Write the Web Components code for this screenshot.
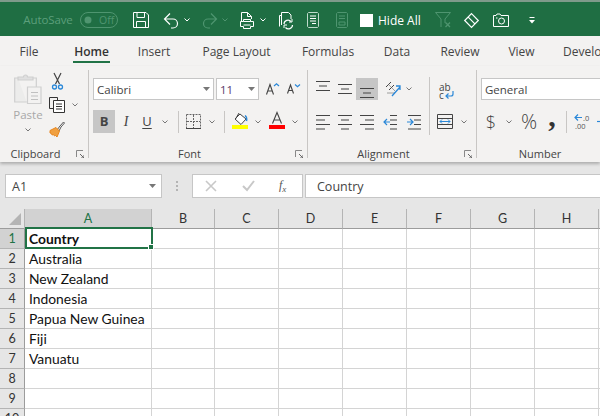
<!DOCTYPE html>
<html lang="en"><head><meta charset="utf-8"><title>Excel</title>
<style>
html,body{margin:0;padding:0;width:600px;height:416px;overflow:hidden;background:#fff}
body{display:flex;flex-direction:column;font-family:"Open Sans","Liberation Sans",sans-serif}
</style></head><body>
<xl-titlebar>
  <xl-tool w="50" ml="23" style="color:#5c9f7b;font-size:11.5px;letter-spacing:-.1px">AutoSave</xl-tool>
  <xl-icon name="toggle" w="38" h="16" ml="7"></xl-icon>
  <xl-icon name="save" w="16" h="16" ml="15"></xl-icon>
  <xl-icon name="undo" w="17" h="17" ml="14"></xl-icon>
  <xl-icon name="chevw" w="6" h="4" ml="4"></xl-icon>
  <xl-icon name="redo" w="17" h="17" ml="11"></xl-icon>
  <xl-icon name="chevf" w="6" h="4" ml="4"></xl-icon>
  <xl-icon name="print" w="14" h="17" ml="12"></xl-icon>
  <xl-icon name="chevw" w="6" h="4" ml="6"></xl-icon>
  <xl-icon name="refresh" w="15" h="17" ml="12"></xl-icon>
  <xl-icon name="doc" w="12" h="16" ml="14"></xl-icon>
  <xl-icon name="docf" w="12" h="16" ml="17"></xl-icon>
  <xl-check ml="12">Hide All</xl-check>
  <xl-icon name="filter" w="16" h="16" ml="14"></xl-icon>
  <xl-icon name="eraser" w="15" h="15" ml="13"></xl-icon>
  <xl-icon name="camera" w="16" h="14" ml="14"></xl-icon>
  <xl-icon name="more" w="6" h="7" ml="20"></xl-icon>
</xl-titlebar>
<xl-tabs>
  <xl-tab w="18" ml="20">File</xl-tab><xl-tab w="37" ml="35" active>Home</xl-tab><xl-tab w="32" ml="28">Insert</xl-tab><xl-tab w="71" ml="31">Page Layout</xl-tab><xl-tab w="52" ml="30">Formulas</xl-tab><xl-tab w="26" ml="30">Data</xl-tab><xl-tab w="40" ml="30">Review</xl-tab><xl-tab w="27" ml="28">View</xl-tab><xl-tab ml="28">Develop</xl-tab>
</xl-tabs>
<xl-ribbon>
  <xl-group label="Clipboard" w="89" launcher="1">
    <xl-row style="align-items:flex-start">
      <xl-col w="32" ml="12" mt="-4">
        <xl-icon name="paste" w="28" h="30"></xl-icon>
        <xl-tool w="30" h="16" style="color:#a8a8a8;font-size:11.5px;margin-top:3px">Paste</xl-tool>
        <xl-icon name="chev" w="6" h="4" style="margin-top:5px"></xl-icon>
      </xl-col>
      <xl-col w="36" ml="4" mt="-5" style="align-items:flex-start">
        <xl-icon name="cut" w="11" h="17" ml="4"></xl-icon>
        <xl-row style="margin-top:7px"><xl-icon name="copy" w="16" h="16" ml="1"></xl-icon><xl-icon name="chev" w="6" h="4" ml="7"></xl-icon></xl-row>
        <xl-icon name="brush" w="16" h="16" ml="1" style="margin-top:8px"></xl-icon>
      </xl-col>
    </xl-row>
  </xl-group>
  <xl-group label="Font" w="219" launcher="1">
    <xl-col ml="4" style="align-items:flex-start">
      <xl-row h="22">
        <xl-box w="121">Calibri</xl-box>
        <xl-box w="43" ml="2" chev="0" style="color:#5b3a6b">11</xl-box>
        <xl-icon name="grow" w="13" h="12" ml="7"></xl-icon>
        <xl-icon name="shrink" w="13" h="10" ml="8"></xl-icon>
      </xl-row>
      <xl-row h="23" style="margin-top:10px">
        <xl-tool w="22" h="23" active style="font-weight:700;font-size:13px">B</xl-tool>
        <xl-tool w="22" h="23" style="font-style:italic;font-family:'Liberation Serif',serif;font-size:14px">I</xl-tool>
        <xl-tool w="20" h="23" style="font-size:13px;text-decoration:underline;text-underline-offset:2px">U</xl-tool>
        <xl-tool w="16" h="23"><xl-icon name="chev" w="6" h="4"></xl-icon></xl-tool>
        <xl-sep ml="5" h="22"></xl-sep>
        <xl-icon name="borders" w="15" h="15" ml="7"></xl-icon>
        <xl-tool w="22" h="23"><xl-icon name="chev" w="6" h="4"></xl-icon></xl-tool>
        <xl-sep h="22" ml="1"></xl-sep>
        <xl-icon name="fill" w="16" h="19" ml="7"></xl-icon>
        <xl-tool w="20" h="23"><xl-icon name="chev" w="6" h="4"></xl-icon></xl-tool>
        <xl-icon name="fontcolor" w="16" h="19" ml="1"></xl-icon>
        <xl-tool w="20" h="23"><xl-icon name="chev" w="6" h="4"></xl-icon></xl-tool>
      </xl-row>
    </xl-col>
  </xl-group>
  <xl-group label="Alignment" w="169" launcher="1">
    <xl-row ml="8" style="align-items:flex-start">
      <xl-col style="align-items:flex-start">
        <xl-row h="22">
          <xl-icon name="atop" w="14" h="22"></xl-icon>
          <xl-icon name="amid" w="14" h="22" ml="8"></xl-icon>
          <xl-tool w="22" h="22" active ml="4"><xl-icon name="abot" w="14" h="22"></xl-icon></xl-tool>
          <xl-icon name="orient" w="16" h="16" ml="7"></xl-icon>
          <xl-icon name="chev" w="6" h="4" ml="5"></xl-icon>
        </xl-row>
        <xl-row h="23" style="margin-top:10px">
          <xl-icon name="aleft" w="14" h="14"></xl-icon>
          <xl-icon name="acen" w="14" h="14" ml="8"></xl-icon>
          <xl-icon name="aright" w="14" h="14" ml="8"></xl-icon>
          <xl-icon name="indl" w="14" h="14" ml="9"></xl-icon>
          <xl-icon name="indr" w="14" h="14" ml="10"></xl-icon>
        </xl-row>
      </xl-col>
      <xl-sep h="58" ml="8" style="margin-top:-1px"></xl-sep>
      <xl-col style="align-items:flex-start">
        <xl-row h="22"><xl-icon name="wrap" w="15" h="16" ml="9" style="margin-top:5px"></xl-icon></xl-row>
        <xl-row h="23" style="margin-top:10px"><xl-icon name="merge" w="16" h="15" ml="7"></xl-icon><xl-icon name="chev" w="6" h="4" ml="8"></xl-icon></xl-row>
      </xl-col>
    </xl-row>
  </xl-group>
  <xl-group label="Number" w="126">
    <xl-col ml="4" style="align-items:flex-start">
      <xl-box w="130">General</xl-box>
      <xl-row h="23" style="margin-top:10px">
        <xl-tool w="20" h="23" style="font-size:18px;font-weight:300">$</xl-tool>
        <xl-icon name="chev" w="6" h="4" ml="5"></xl-icon>
        <xl-tool w="24" h="23" ml="5" style="font-size:20px;font-weight:300">%</xl-tool>
        <xl-tool w="10" h="23" ml="6" style="font:700 30px/23px 'Liberation Serif',serif;align-items:flex-start;color:#333;overflow:visible"><span style="position:relative;top:-6px">,</span></xl-tool>
        <xl-sep h="22" ml="9"></xl-sep>
        <xl-icon name="incdec" w="17" h="15" ml="7"></xl-icon>
        <xl-icon name="incarrow" w="8" h="15" ml="6"></xl-icon>
      </xl-row>
    </xl-col>
  </xl-group>
</xl-ribbon>
<xl-formulabar name="A1" value="Country"></xl-formulabar>
<xl-sheet></xl-sheet>
<script>
const ICONS={
toggle:'<rect x=".5" y=".5" width="37" height="15" rx="7.5" fill="none" stroke="#4f9570"/><circle cx="8" cy="8" r="3.5" fill="#4f9570"/><text x="19" y="12" font-size="10.5" fill="#4f9570" font-family="Open Sans,sans-serif">Off</text>',
save:'<path d="M.5.5h12.5l2.5 2.5v12.5H.5zM4 .5v5h7.5v-5M3.5 15.5v-6h9v6" fill="none" stroke="#fff"/>',
undo:'<path d="M7 1.5 1.5 7 7 12.5M1.5 7H10a4.5 4.5 0 0 1 0 9H8" fill="none" stroke="#fff" stroke-width="1.2"/>',
redo:'<path d="M10 1.5 15.5 7 10 12.5M15.5 7H7a4.5 4.5 0 0 0 0 9h2" fill="none" stroke="#4f9570" stroke-width="1.2"/>',
chevw:'<path d="M.5.5 3 3 5.5.5" fill="none" stroke="#fff"/>',
chevf:'<path d="M.5.5 3 3 5.5.5" fill="none" stroke="#4f9570"/>',
chev:'<path d="M.5.5 3 3 5.5.5" fill="none" stroke="#777"/>',
print:'<path d="M1.5 9V.5h6l4 4V7M7.5.5v4h4" fill="none" stroke="#fff"/><path d="M3.5 7.5h7v2h3v5h-3v2h-7v-2h-3v-5h3zM3.5 9.5h7M3.5 13h7" fill="none" stroke="#fff"/>',
refresh:'<path d="M1.500 14.500V3.500h2M3.500 13V.5h7l2.500 2.500v4" fill="none" stroke="#fff"/><path d="M6 12a4 4 0 0 1 7-2.500M14.500 13a4 4 0 0 1-7 2.500" fill="none" stroke="#fff" stroke-width="1.200"/><path d="M14 7v3h-3M6 16v-3h3" fill="none" stroke="#fff"/>',
doc:'<path d="M1.500.5h9l1 1v13l-1 1h-9l-1-1v-13z" fill="none" stroke="#bfdacb"/><path d="M3 4h6M3 6.500h6M3 9h6M5 11.500h4" stroke="#fff"/>',
docf:'<path d="M1.500.5h9l1 1v13l-1 1h-9l-1-1v-13z" fill="none" stroke="#4f9570"/><path d="M3 4h6M3 6.500h6M3 10h6v3H3z" stroke="#4f9570" fill="none"/>',
filter:'<path d="M.5.500h15L10 7v4M6 7 .500.500M6 7v8" fill="none" stroke="#4f9570"/><path d="M10.500 10.500 15 15M15 10.500 10.500 15" stroke="#4f9570" stroke-width="1.300"/>',
eraser:'<path d="M7.500.7 14.300 7.500 7.500 14.300.7 7.500zM4.200 4.100 10.900 10.900" fill="none" stroke="#fff" stroke-width="1.200"/>',
camera:'<path d="M.5 2.500h2.500l1-1.500h3l1 1.500h7.500v11H.5z" fill="none" stroke="#fff"/><circle cx="8.500" cy="8" r="3" fill="none" stroke="#fff"/><path d="M3 5h1.500" stroke="#fff"/>',
more:'<path d="M.5.5h5" stroke="#fff"/><path d="M0 3h6L3 6.500z" fill="#fff"/>',
paste:'<g fill="none" stroke="#cfcfcf" stroke-width="1.200"><path d="M4 4H.7v24h12" fill="#ececeb"/><path d="M19 4h3.300v9"/><path d="M4 6V3h5.500a2 2 0 0 1 4 0H19v3z" fill="#e0e0e0"/><path d="M13.500 13H27v16.500H13.500z" fill="#f3f2f1"/></g><path d="M17 18.500h7M17 22h7M17 25.500h7" stroke="#c0c0c0"/>',
cut:'<path d="M2 0 7.500 11M9 0 3.500 11" stroke="#444" stroke-width="1.200" fill="none"/><circle cx="2.500" cy="14" r="2" fill="none" stroke="#2b88d8" stroke-width="1.300"/><circle cx="8.500" cy="14" r="2" fill="none" stroke="#2b88d8" stroke-width="1.300"/>',
copy:'<path d="M4 11.500H.5v-11h8v3" fill="none" stroke="#333"/><path d="M4.500 3.500h11v12h-11z" fill="#fff" stroke="#333"/><path d="M7 7h6M7 9.500h6M7 12h6" stroke="#333"/>',
brush:'<path d="M8 9 11 5l3.500-4 1 1L12 6l-2 4z" fill="#fff" stroke="#444" stroke-width=".9"/><path d="M1 9.500 7 6.500l3.500 3.500-2.500 6-1.500-1.500-1 .5-1-1.500-1.500.5-.5-1.500-1.500-.5z" fill="#f0a040" stroke="#e8861e"/>',
grow:'<path d="M.5 11.500 4 1.500l3.500 10M1.800 8h4.400" fill="none" stroke="#444" stroke-width="1.100"/><path d="M8 3l2.500-2.300L13 3" fill="none" stroke="#2b88d8" stroke-width="1.200"/>',
shrink:'<path d="M.5 9.500 3.500 1l3 8.500M1.500 6.500h4" fill="none" stroke="#444" stroke-width="1.100"/><path d="M8 .5l2.500 2.300L13 .5" fill="none" stroke="#2b88d8" stroke-width="1.200"/>',
borders:'<path d="M.5.5h14v14H.5z" fill="none" stroke="#666" stroke-dasharray="2 1"/><path d="M7.500 1v13M1 7.500h13" stroke="#666" stroke-dasharray="2 1"/><path d="M0 14.500h15" stroke="#444"/>',
fill:'<path d="M8 2l6 5-5 5.500-6-5.500z" fill="#fff" stroke="#444"/><path d="M3.500 7 7 1" stroke="#444"/><path d="M13 3.500c1.500 1 2 3 1.500 5.500" fill="none" stroke="#2b88d8" stroke-width="1.500"/><rect y="13" width="16" height="4" fill="#ff0"/>',
fontcolor:'<path d="M3.500 11.500 8 .5l4.500 11M5 8h6" fill="none" stroke="#444" stroke-width="1.100"/><rect y="13" width="16" height="4" fill="#f00"/>',
atop:'<path d="M0 3.500h14M3 8h8M0 12.500h14" stroke="#444" stroke-width="1.100"/>',
amid:'<path d="M0 6.500h14M3 11h8M0 15.500h14" stroke="#444" stroke-width="1.100"/>',
abot:'<path d="M0 10.500h14M3 15h8M0 19.500h14" stroke="#444" stroke-width="1.100"/>',
orient:'<path d="M1 6 6 1M4 9 9 4" stroke="#444" fill="none"/><path d="M2 12 10 12M3 3l7 7" stroke="#666" fill="none" opacity=".6"/><path d="M7 15 15 6M11 5h4v4" stroke="#2b88d8" stroke-width="1.300" fill="none"/>',
aleft:'<path d="M0 .5h14M0 5h9M0 9.500h14M0 14h9" stroke="#444" stroke-width="1.100"/>',
acen:'<path d="M0 .5h14M3 5h8M0 9.500h14M3 14h8" stroke="#444" stroke-width="1.100"/>',
aright:'<path d="M0 .5h14M5 5h9M0 9.500h14M5 14h9" stroke="#444" stroke-width="1.100"/>',
indl:'<path d="M7 .5h7M7 5h7M7 9.500h7M7 14h7" stroke="#444" stroke-width="1.100"/><path d="M4 4 1 7l3 3M1 7h6" stroke="#2b88d8" stroke-width="1.200" fill="none"/>',
indr:'<path d="M1 .5h13M7 5h7M7 9.500h7M1 14h13" stroke="#444" stroke-width="1.100"/><path d="M3 4l3 3-3 3M0 7h6" stroke="#2b88d8" stroke-width="1.200" fill="none"/>',
wrap:'<text x="0" y="7" font-size="10" fill="#444" font-family="Open Sans,sans-serif">ab</text><text x="0" y="15" font-size="10" fill="#444" font-family="Open Sans,sans-serif">c</text><path d="M14 7v3a2 2 0 0 1-2 2H7M9.500 9.500 7 12l2.500 2.500" fill="none" stroke="#2b88d8" stroke-width="1.200"/>',
merge:'<path d="M.5.5h15v14H.5zM.5 4.500h15M.5 10.500h15" fill="none" stroke="#444"/><path d="M3 7.500h10M5 5.500l-2 2 2 2M11 5.500l2 2-2 2" fill="none" stroke="#2b88d8"/>',
incdec:'<path d="M1 3.500h7M4 .5l-3 3 3 3" fill="none" stroke="#2b88d8" stroke-width="1.200"/><text x="9" y="6.500" font-size="7.500" fill="#555" font-family="Open Sans,sans-serif">.0</text><text x="1" y="14.500" font-size="7.500" fill="#555" font-family="Open Sans,sans-serif">.00</text>',
incarrow:'<path d="M0 7.500h8" stroke="#2b88d8" stroke-width="1.200"/>',
x:'<path d="M1 1l10 10M11 1 1 11" stroke="#c8c8c8" stroke-width="1.600" fill="none"/>',
ok:'<path d="M1 6l4 4 7-9" stroke="#c8c8c8" stroke-width="2" fill="none"/>',
tri:'<path d="M0 0h7L3.500 4z" fill="#777"/>',
dots:'<path d="M0 0h2v2H0zM0 4h2v2H0zM0 8h2v2H0z" fill="#b4b4b4"/>',
corner:'<path d="M12 0v12H0z" fill="#b4b4b4"/>',
launch:'<path d="M.5 7V.5H7" fill="none" stroke="#888"/><path d="M4 4l4 4M8 5v3H5" fill="none" stroke="#666"/>'
};
function def(name,css,html,extra){
  const t=document.createElement('template');
  t.innerHTML='<style>'+css+'</style>'+html;
  customElements.define(name,class extends HTMLElement{
    connectedCallback(){
      if(this.shadowRoot)return;
      const s=this.attachShadow({mode:'open'});
      s.appendChild(t.content.cloneNode(true));
      const a=n=>this.getAttribute(n);
      if(a('w'))this.style.width=a('w')+'px';
      if(a('h'))this.style.height=a('h')+'px';
      if(a('ml')&&!this.style.marginLeft)this.style.marginLeft=a('ml')+'px';
      if(a('mt'))this.style.marginTop=a('mt')+'px';
      if(extra)extra.call(this,s);
    }
  });
}
def('xl-icon',':host{display:block;flex:none;line-height:0}svg{display:block;overflow:visible}','<svg></svg>',function(s){
  const v=s.querySelector('svg'),w=this.getAttribute('w'),h=this.getAttribute('h');
  v.setAttribute('width',w);v.setAttribute('height',h);v.setAttribute('viewBox','0 0 '+w+' '+h);
  v.innerHTML=ICONS[this.getAttribute('name')]||'';
});
def('xl-titlebar',':host{display:flex;flex:none;align-items:center;background:#1f6e43;border-top:2px solid #7f9a8b;height:32px;padding:2px 0 0;overflow:hidden}','<slot></slot>');
def('xl-tool',':host{display:flex;flex:none;align-items:center;justify-content:center;color:#444;white-space:nowrap;line-height:1}:host([active]){background:#c6c6c6}','<slot></slot>');
def('xl-check',':host{display:flex;flex:none;align-items:center;color:#fff;font-size:12px;white-space:nowrap;gap:5px}i{display:block;width:13px;height:13px;background:#fff}','<i></i><slot></slot>');
def('xl-tabs',':host{display:flex;flex:none;height:30px;background:#f3f2f1;overflow:hidden}','<slot></slot>');
def('xl-tab',':host{display:flex;justify-content:center;flex:none;position:relative;font-size:12px;line-height:31px;color:#444;white-space:nowrap;height:30px;box-sizing:border-box}:host([active]){font-weight:600;color:#333}:host([active])::after{content:"";position:absolute;left:0;right:0;bottom:3px;height:2px;background:#217346}','<slot></slot>');
def('xl-ribbon',':host{display:flex;flex:none;height:96px;background:#f3f2f1;overflow:hidden;box-shadow:0 2px 3px rgba(0,0,0,.25);position:relative;z-index:1}','<slot></slot>');
def('xl-group',':host{display:flex;flex:none;flex-direction:column;box-sizing:border-box;height:96px;position:relative}.b{flex:1;padding-top:12px;min-height:0;display:flex}.l{height:16px;line-height:16px;font-size:11px;color:#444;text-align:center;position:relative}:host([launcher]) .l{padding-right:18px}.s{position:absolute;right:0;top:4px;bottom:4px;width:1px;background:#c8c6c4}svg{position:absolute;right:5px;top:4px}','<div class="b"><slot></slot></div><div class="l"><span></span></div><div class="s"></div>',function(s){
  s.querySelector('span').textContent=this.getAttribute('label');
  if(this.getAttribute('launcher')){const d=s.querySelector('.l');d.insertAdjacentHTML('beforeend','<svg width="8" height="8" viewBox="0 0 8 8">'+ICONS.launch+'</svg>');}
});
def('xl-row',':host{display:flex;flex:none;align-items:center}','<slot></slot>');
def('xl-col',':host{display:flex;flex:none;flex-direction:column;align-items:center}','<slot></slot>');
def('xl-sep',':host{display:block;flex:none;width:1px;background:#c8c6c4}','');
def('xl-box',':host{display:flex;flex:none;align-items:center;box-sizing:border-box;height:22px;background:#fff;border:1px solid #c6c6c6;padding-left:3px;font-size:11.500px;color:#444;position:relative}svg{position:absolute;right:3px;top:8px}','<slot></slot>',function(s){
  if(this.hasAttribute('chev')||this.getAttribute('w')==='121'){s.appendChild(document.createRange().createContextualFragment('<svg width="7" height="4" viewBox="0 0 7 4">'+ICONS.tri+'</svg>'));}
});
def('xl-formulabar',':host{display:flex;flex:none;height:47px;box-sizing:border-box;padding:12px 0 11px 5px;background:#e6e6e6;align-items:stretch}div{background:#fff;border:1px solid #c6c6c6;box-sizing:border-box;display:flex;align-items:center;font-size:12.500px;color:#444}.n{width:157px;padding-left:6px;position:relative}.n svg{position:absolute;right:5px;top:9px}.d{background:none;border:0;width:30px;justify-content:center}.f{width:111px;position:relative;padding-left:12px}.v{flex:1;margin-left:2px;padding-left:11px;border-right:0}.fx{font:italic 12px "Liberation Serif",serif;margin-left:24px;color:#555}','<div class="n"><span class="a"></span><svg width="7" height="4" viewBox="0 0 7 4">'+ICONS.tri+'</svg></div><div class="d"><svg width="2" height="10" viewBox="0 0 2 10">'+ICONS.dots+'</svg></div><div class="f"><svg width="12" height="12" viewBox="0 0 12 12">'+ICONS.x+'</svg><svg width="13" height="12" viewBox="0 0 13 12" style="margin-left:25px">'+ICONS.ok+'</svg><span class="fx">f<sub style="font-size:9px">x</sub></span></div><div class="v"></div>',function(s){
  s.querySelector('.a').textContent=this.getAttribute('name');
  s.querySelector('.v').textContent=this.getAttribute('value');
});
def('xl-sheet',':host{display:grid;flex:1;min-height:0;overflow:hidden;grid-template-columns:25px 127px 63px repeat(6,64px) 64px;grid-auto-rows:20px;background:#fff}div{box-sizing:border-box;white-space:nowrap}.h{background:#e6e6e6;color:#333;font-size:12.500px;display:flex;align-items:center;justify-content:center;border-right:1px solid #b4b4b4;border-bottom:1px solid #9c9c9c;font-family:Lato,sans-serif}.r{border-right:1px solid #9c9c9c;border-bottom:1px solid #b4b4b4}.on{background:#d2d2d2;color:#217346}.c{border-right:1px solid #d4d4d4;border-bottom:1px solid #d4d4d4;font:13.850px/19px Lato,"Liberation Sans",sans-serif;color:#111;padding-left:4px;position:relative}.c.b{font-weight:700}.sel{position:absolute;left:0;top:-2px;width:128px;height:22px;border:2px solid #217346;z-index:2}.sel::after{content:"";position:absolute;right:-3px;bottom:-3px;width:6px;height:6px;background:#217346;border:1px solid #fff;box-sizing:border-box}.k{justify-content:flex-end;align-items:flex-end;padding:0 3px 3px 0}','',function(s){
  const rows=['Country','Australia','New Zealand','Indonesia','Papua New Guinea','Fiji','Vanuatu','','',''];
  const cols=['A','B','C','D','E','F','G','H',''];
  let h='<div class="h k"><svg width="12" height="12" viewBox="0 0 12 12">'+ICONS.corner+'</svg></div>';
  cols.forEach((c,i)=>h+='<div class="h'+(i?'':' on')+'">'+c+'</div>');
  rows.forEach((t,r)=>{
    h+='<div class="h r'+(r?'':' on')+'">'+(r+1)+'</div>';
    cols.forEach((c,i)=>{
      h+='<div class="c'+(!r&&!i?' b':'')+'">'+(i?'':t)+(!r&&!i?'<div class="sel"></div>':'')+'</div>';
    });
  });
  s.appendChild(document.createRange().createContextualFragment(h));
});
</script>
</body></html>
